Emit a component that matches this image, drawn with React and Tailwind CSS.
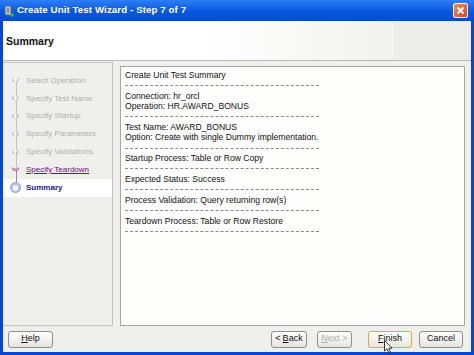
import React from "react";

const font = { fontFamily: '"Liberation Sans", Arial, sans-serif' };

const steps = [
  { label: "Select Operation", state: "done" },
  { label: "Specify Test Name", state: "done" },
  { label: "Specify Startup", state: "done" },
  { label: "Specify Parameters", state: "done" },
  { label: "Specify Validations", state: "done" },
  { label: "Specify Teardown", state: "visited" },
  { label: "Summary", state: "current" },
];

const summary = [
  ["Create Unit Test Summary"],
  ["Connection: hr_orcl", "Operation: HR.AWARD_BONUS"],
  ["Test Name: AWARD_BONUS", "Option: Create with single Dummy implementation."],
  ["Startup Process: Table or Row Copy"],
  ["Expected Status: Success"],
  ["Process Validation: Query returning row(s)"],
  ["Teardown Process: Table or Row Restore"],
];

function Bullet({ state }) {
  if (state === "current") {
    return (
      <svg width="11" height="11" viewBox="0 0 11 11">
        <circle cx="5.5" cy="5.5" r="5" fill="#b9c8ee" stroke="#8aa0d8" />
        <circle cx="5.5" cy="6" r="2.6" fill="#ffffff" />
      </svg>
    );
  }
  const c = state === "visited" ? "#b07aa8" : "#c2c2cc";
  return (
    <svg width="9" height="9" viewBox="0 0 9 9">
      <path d="M1.5 2.5 A3 3 0 0 0 7.5 2.5" fill="none" stroke={c} strokeWidth="1.4" />
      <circle cx="4.5" cy="4.5" r="1.4" fill={state === "visited" ? "#c9a0c2" : "#ffffff"} />
    </svg>
  );
}

function XpButton({ children, disabled, focused, className = "" }) {
  return (
    <div
      className={`h-[17px] flex items-center justify-center rounded-[3px] border text-[9px] ${
        focused ? "border-[#e8a33c]" : "border-[#8e8f8f]"
      } bg-gradient-to-b from-white to-[#e6e5de] ${disabled ? "text-[#aeaea6]" : "text-[#111]"} ${className}`}
    >
      {children}
    </div>
  );
}

export default function App() {
  return (
    <div className="relative w-[474px] h-[355px] flex flex-col bg-[#0747d6] overflow-hidden" style={font}>
      {/* title bar */}
      <div className="h-[21px] flex items-center bg-gradient-to-b from-[#2d7ff5] via-[#0a5ae2] to-[#0649d0] pl-[4px] pr-[6px]">
        <svg width="10" height="12" viewBox="0 0 10 12" className="mr-[3px]">
          <rect x="1" y="1" width="6" height="9" rx="1" fill="#d8dce4" stroke="#5b6070" />
          <rect x="2.5" y="2.5" width="3" height="6" fill="#8a90a0" />
          <circle cx="8" cy="10" r="1.8" fill="#3bb54a" />
        </svg>
        <span className="text-white font-bold text-[9.7px] tracking-[0.1px] flex-1">
          Create Unit Test Wizard - Step 7 of 7
        </span>
        <div className="w-[15px] h-[15px] rounded-[2px] border border-white bg-gradient-to-br from-[#ec8a62] to-[#d5451d] flex items-center justify-center">
          <svg width="9" height="9" viewBox="0 0 9 9">
            <path d="M1.5 1.5 L7.5 7.5 M7.5 1.5 L1.5 7.5" stroke="#fff" strokeWidth="1.8" />
          </svg>
        </div>
      </div>

      {/* window body */}
      <div className="flex-1 flex flex-col mx-[3px] mb-[3px] bg-[#efefec]">
        {/* header */}
        <div className="h-[40px] flex border-b border-[#b9b9b5] bg-white">
          <div className="flex-1 flex items-center pl-[3px] bg-gradient-to-r from-white via-white to-[#f2f2f0]">
            <span className="text-[10.5px] font-bold text-[#111] mt-[2px]">Summary</span>
          </div>
          <div className="w-[77px] bg-[#ececea]" />
        </div>

        {/* main */}
        <div className="flex-1 flex gap-[7px] pt-[1px] pr-[6px]">
          {/* nav */}
          <div className="w-[110px] border-r border-b border-t border-[#c3c3bf] bg-[#efefec] pt-[9px]">
            {steps.map((s, i) => (
              <div
                key={s.label}
                className={`relative h-[17.8px] flex items-center ${s.state === "current" ? "bg-white" : ""}`}
              >
                {i > 0 && (
                  <div
                    className={`absolute left-[13px] top-[-9px] w-[1px] h-[18px] ${
                      steps[i - 1].state === "done" ? "bg-[#c2c2cc]" : "bg-[#b07aa8]"
                    }`}
                  />
                )}
                <div className="relative w-[23px] flex justify-center pl-[4px] pr-[2px]">
                  <Bullet state={s.state} />
                </div>
                <span
                  className={`text-[8px] ${
                    s.state === "done"
                      ? "text-[#b0b0ac]"
                      : s.state === "visited"
                      ? "text-[#800080] underline"
                      : "text-[#1a2580] font-bold"
                  }`}
                >
                  {s.label}
                </span>
              </div>
            ))}
          </div>

          {/* content */}
          <div className="flex-1 mt-[4px] border border-[#a5a5a1] bg-[#fdfefc] pl-[4px] pt-[3px] text-[8.6px] leading-[10.4px] text-[#111]">
            {summary.map((group, i) => (
              <div key={i}>
                {group.map((line) => (
                  <div key={line}>{line}</div>
                ))}
                <div className="h-[10.4px] flex items-center">
                  <div className="w-[194px] border-t border-dashed border-[#8a8a8a]" />
                </div>
              </div>
            ))}
          </div>
        </div>

        {/* buttons */}
        <div className="h-[26px] flex items-center pl-[5px] pr-[8px]">
          <XpButton className="w-[45px]">
            <span className="underline">H</span>elp
          </XpButton>
          <div className="flex-1" />
          <XpButton className="w-[36px] mr-[10px]">
            &lt; <span className="underline ml-[2px]">B</span>ack
          </XpButton>
          <XpButton disabled className="w-[35px] mr-[16px]">
            <span className="underline">N</span>ext &gt;
          </XpButton>
          <XpButton focused className="w-[44px] mr-[7px]">
            <span className="underline">F</span>inish
          </XpButton>
          <XpButton className="w-[44px]">Cancel</XpButton>
        </div>
      </div>

      {/* mouse cursor */}
      <svg className="absolute left-[384px] top-[340px]" width="9" height="14" viewBox="0 0 9 14">
        <path d="M0.5 0.5 L0.5 11 L3 8.8 L5 13 L6.6 12.3 L4.7 8.2 L8 8.2 Z" fill="#fff" stroke="#000" strokeWidth="0.8" />
      </svg>
    </div>
  );
}
